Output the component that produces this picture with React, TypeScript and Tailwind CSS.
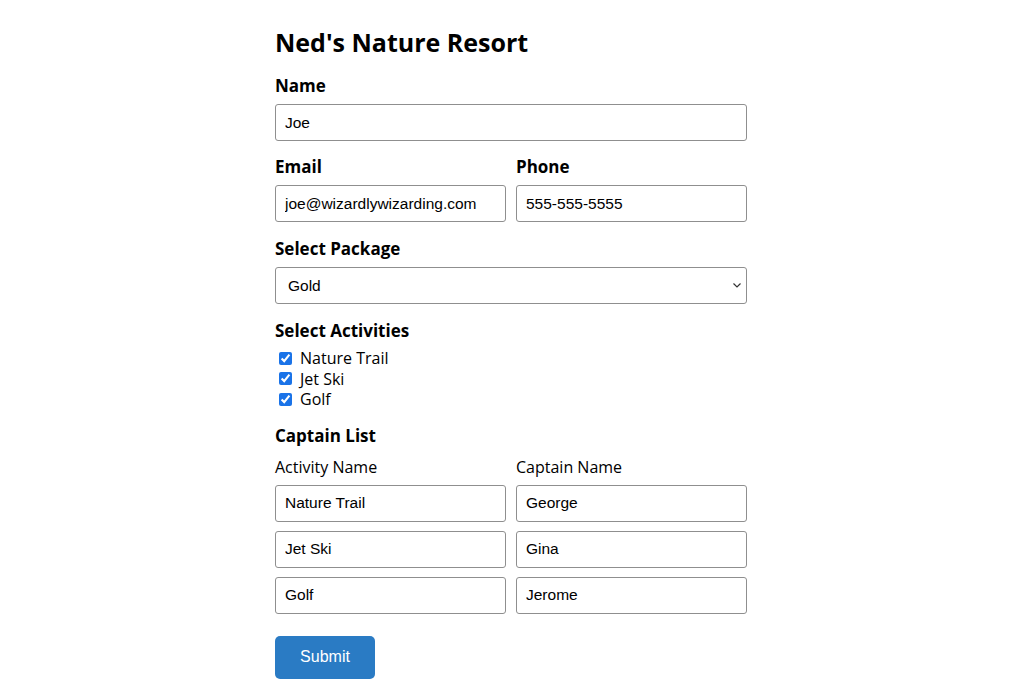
import React from 'react'

const labelFont = { fontFamily: '"Open Sans", "DejaVu Sans", sans-serif' }

const inputCls =
  "block h-[37px] w-full rounded-[3px] border border-[#8f8f8f] bg-white pl-[9px] text-[15.5px] text-black outline-none font-['Liberation_Sans',Arial,sans-serif]"

const captains = [
  { activity: 'Nature Trail', captain: 'George' },
  { activity: 'Jet Ski', captain: 'Gina' },
  { activity: 'Golf', captain: 'Jerome' }
]

const Label: React.FC<{ children: React.ReactNode; className?: string }> = ({
  children,
  className = ''
}) => (
  <div className={`text-[17px] font-bold leading-5 text-black ${className}`}>
    {children}
  </div>
)

const App: React.FC = () => {
  return (
    <div
      className="min-h-[700px] w-full bg-white font-['Open_Sans','DejaVu_Sans',sans-serif]"
      style={labelFont}
    >
      <form
        className="mx-auto w-[474px] pr-[2px] pt-[26px]"
        onSubmit={(e) => e.preventDefault()}
      >
        <h1 className="h-8 text-[25px] font-bold leading-8 text-black">
          Ned's Nature Resort
        </h1>

        <Label className="mt-[18px] mb-2">Name</Label>
        <input className={inputCls} defaultValue="Joe" />

        <div className="mt-4 grid grid-cols-2 gap-x-[10px]">
          <div>
            <Label className="mb-2">Email</Label>
            <input className={inputCls} defaultValue="joe@wizardlywizarding.com" />
          </div>
          <div>
            <Label className="mb-2">Phone</Label>
            <input className={inputCls} defaultValue="555-555-5555" />
          </div>
        </div>

        <Label className="mt-[17px] mb-2">Select Package</Label>
        <div className="relative">
          <select
            className="block h-[37px] w-full appearance-none rounded-[3px] border border-[#8f8f8f] bg-white pl-3 text-[15.5px] text-black outline-none font-['Liberation_Sans',Arial,sans-serif]"
            defaultValue="Gold"
          >
            <option>Bronze</option>
            <option>Silver</option>
            <option>Gold</option>
          </select>
          <svg
            className="pointer-events-none absolute right-[5px] top-[15px]"
            width="10"
            height="7"
            viewBox="0 0 10 7"
            fill="none"
          >
            <path d="M1.5 1.5 5 5 8.5 1.5" stroke="#333" strokeWidth="1.2" />
          </svg>
        </div>

        <Label className="mt-[17px] mb-[7px]">Select Activities</Label>
        <div className="flex flex-col">
          {['Nature Trail', 'Jet Ski', 'Golf'].map((a) => (
            <label key={a} className="flex h-[20.5px] items-center text-[16px] text-black">
              <input
                type="checkbox"
                defaultChecked
                className="ml-1 mr-[3px] h-[13px] w-[13px] accent-[#1a73e8]"
              />
              <span className="ml-[5px]">{a}</span>
            </label>
          ))}
        </div>

        <Label className="mt-4">Captain List</Label>
        <div className="mt-[11px] grid grid-cols-2 gap-x-[10px] gap-y-[9px]">
          <div className="-mb-[1px] text-[16px] leading-5 text-black">Activity Name</div>
          <div className="-mb-[1px] text-[16px] leading-5 text-black">Captain Name</div>
          {captains.map((c) => (
            <React.Fragment key={c.activity}>
              <input className={inputCls} defaultValue={c.activity} />
              <input className={inputCls} defaultValue={c.captain} />
            </React.Fragment>
          ))}
        </div>

        <button
          type="submit"
          className="mt-[22px] h-[43px] w-[100px] rounded-[5px] bg-[#2a7bc4] text-[16px] text-white font-['Liberation_Sans',Arial,sans-serif]"
        >
          Submit
        </button>
      </form>
    </div>
  )
}

export default App
